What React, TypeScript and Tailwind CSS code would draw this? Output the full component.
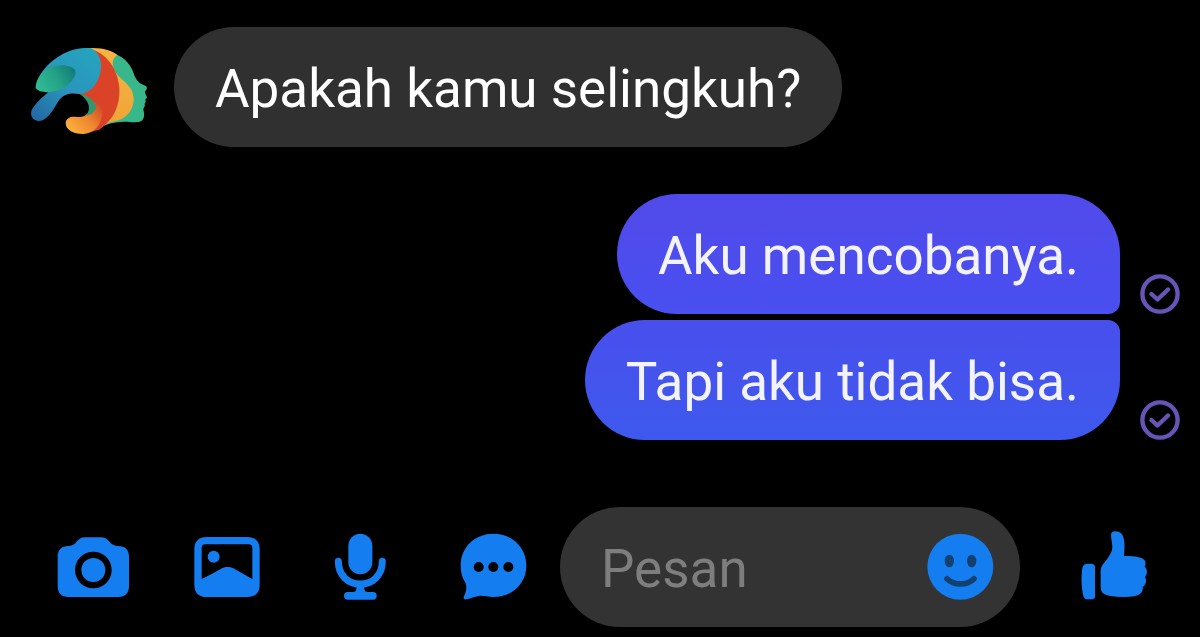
import type { ReactNode } from "react";

const outgoing = [
  {
    id: 1,
    text: "Aku mencobanya.",
    shape: "rounded-[60px] rounded-br-[12px] bg-linear-to-b from-[#514aea] to-[#494ff0]",
  },
  {
    id: 2,
    text: "Tapi aku tidak bisa.",
    shape: "rounded-[60px] rounded-tr-[12px] bg-linear-to-b from-[#484fec] to-[#3e59ee]",
  },
];

function Avatar() {
  return (
    <svg viewBox="30 -24 360 360" className="size-[120px] shrink-0" role="img" aria-label="Avatar">
      <defs>
        <linearGradient id="blue" x1="0.8" y1="0" x2="0.1" y2="1">
          <stop offset="0" stopColor="#25a3bd" />
          <stop offset="0.5" stopColor="#2b95bd" />
          <stop offset="1" stopColor="#2369a4" />
        </linearGradient>
        <linearGradient id="leaf" x1="0" y1="0.6" x2="1" y2="0.2">
          <stop offset="0" stopColor="#2fba92" />
          <stop offset="0.5" stopColor="#24a287" />
          <stop offset="1" stopColor="#127a78" />
        </linearGradient>
        <linearGradient id="hook" x1="0" y1="0.8" x2="1" y2="0">
          <stop offset="0" stopColor="#fbb23c" />
          <stop offset="0.5" stopColor="#ee8630" />
          <stop offset="1" stopColor="#cf3f22" />
        </linearGradient>
        <linearGradient id="yellow" x1="0" y1="0" x2="0" y2="1">
          <stop offset="0" stopColor="#f5b643" />
          <stop offset="1" stopColor="#f0a338" />
        </linearGradient>
      </defs>
      {/* face */}
      <path
        d="M262 50 C306 58 332 84 342 118 C348 136 358 147 378 153 C383 157 381 164 375 169 C374 176 381 183 381 188 C378 191 375 192 377 198 C378 202 373 205 374 209 C377 213 370 217 370 224 C374 238 374 250 363 259 C354 263 338 262 322 260 C296 260 270 262 246 275 Z"
        fill="#38b78b"
      />
      <path
        d="M206 39 C250 37 280 48 292 60 C272 72 276 96 290 116 C306 138 340 152 341 190 C342 222 322 252 284 259 C266 262 254 268 238 280 Z"
        fill="url(#yellow)"
      />
      <path
        d="M202 39 C262 52 294 104 298 160 C301 212 280 256 238 284 L214 290 L222 210 C214 196 200 184 178 176 L190 120 Z"
        fill="#db4329"
      />
      {/* curl under the head */}
      <path
        d="M222 200 C240 210 250 224 246 244 C240 274 218 298 188 297 C160 296 136 284 137 263 C139 247 155 243 172 246 C190 248 203 240 208 226 Z"
        fill="url(#hook)"
      />
      <path
        d="M178 176 C204 180 222 196 229 214 C226 228 218 238 206 240 C200 242 198 240 202 236 C212 220 208 196 178 176 Z"
        fill="#31976f"
      />
      <path
        d="M47 158 C48 132 68 104 90 84 C130 48 176 34 214 40 C240 54 248 84 240 116 C230 154 206 176 178 177 C150 172 128 178 114 200 C98 228 80 258 54 258 C34 256 28 236 38 220 C50 200 68 186 86 170 Z"
        fill="url(#blue)"
      />
      <path
        d="M47 160 C48 134 66 108 90 97 C114 86 154 90 165 104 C172 122 152 148 124 162 C98 174 60 176 47 160 Z"
        fill="url(#leaf)"
      />
    </svg>
  );
}

function SentMark() {
  return (
    <svg
      viewBox="0 0 40 40"
      className="size-10 shrink-0"
      fill="none"
      stroke="#6854b8"
      strokeWidth="4.4"
      strokeLinecap="round"
      strokeLinejoin="round"
      role="img"
      aria-label="Terkirim"
    >
      <circle cx="20" cy="20" r="17.6" />
      <path d="M11.5 20 L17.5 25.5 L28 15.5" />
    </svg>
  );
}

function IconButton({ label, viewBox, children }: { label: string; viewBox: string; children: ReactNode }) {
  return (
    <button type="button" aria-label={label} className="shrink-0 cursor-pointer">
      <svg viewBox={viewBox} className="size-[72px]" fill="#147df0">
        {children}
      </svg>
    </button>
  );
}

export default function App() {
  return (
    <div className="flex min-h-screen flex-col bg-black pt-[27px] pb-[10px] font-[Roboto,sans-serif] text-[53px] leading-[60px] text-white">
      <main className="flex flex-1 flex-col">
        <div className="flex items-center gap-6 pl-[30px]">
          <Avatar />
          <p className="rounded-[60px] bg-[#303030] px-[41px] pt-8 pb-7">Apakah kamu selingkuh?</p>
        </div>

        <div className="mt-[47px] flex flex-col gap-[6px] pr-5">
          {outgoing.map((message) => (
            <div key={message.id} className="flex items-end justify-end gap-5">
              <p className={`px-[41px] pt-8 pb-7 text-[#f3f3ff] ${message.shape}`}>{message.text}</p>
              <SentMark />
            </div>
          ))}
        </div>
      </main>

      <form className="flex items-center pr-[50px] pl-[57px]" onSubmit={(e) => e.preventDefault()}>
        <div className="flex gap-[61px]">
          <IconButton label="Kamera" viewBox="51 33 216 216">
            <path
              fillRule="evenodd"
              d="M86 78 C112 78 108 52 136 52 H182 C210 52 206 78 234 78 C256 78 267 90 267 110 V198 C267 220 256 231 234 231 H86 C64 231 53 220 53 198 V110 C53 90 64 78 86 78 Z M160 95 a55 55 0 1 0 0 110 a55 55 0 1 0 0 -110 Z"
            />
            <circle cx="160" cy="150" r="36" />
          </IconButton>
          <IconButton label="Galeri" viewBox="450 33 216 216">
            <path
              fillRule="evenodd"
              d="M500 51 H622 C646 51 659 64 659 88 V194 C659 218 646 231 622 231 H500 C476 231 463 218 463 194 V88 C463 64 476 51 500 51 Z M496 73 C489 73 485 77 485 84 V177 C508 165 526 156 542 147 C556 139 570 139 584 147 L637 177 V84 C637 77 633 73 626 73 Z"
            />
            <circle cx="521" cy="110" r="18" />
          </IconButton>
          <IconButton label="Rekam suara" viewBox="9 33 216 216">
            <rect x="85" y="41" width="72" height="122" rx="36" />
            <path
              d="M55 124 C55 166 84 192 121 192 C158 192 187 166 187 124"
              fill="none"
              stroke="#147df0"
              strokeWidth="21"
              strokeLinecap="round"
            />
            <path d="M109 190 H133 V206 C133 212 137 216 143 216 H159 a11 11 0 0 1 11 11 a12 12 0 0 1 -11 12 H83 a12 12 0 0 1 -11 -12 a11 11 0 0 1 11 -11 H99 C105 216 109 212 109 206 Z" />
          </IconButton>
          <IconButton label="Stiker" viewBox="408 33 216 216">
            <path
              fillRule="evenodd"
              d="M520 41 C576 41 619 82 619 137 C619 191 576 231 520 231 C502 231 490 226 476 228 C462 231 450 236 438 238 C432 239 429 235 432 229 C438 216 442 202 436 188 C426 172 422 156 422 137 C422 82 464 41 520 41 Z M476 126 a15 15 0 1 0 0 30 a15 15 0 1 0 0 -30 Z M520 126 a15 15 0 1 0 0 30 a15 15 0 1 0 0 -30 Z M565 126 a15 15 0 1 0 0 30 a15 15 0 1 0 0 -30 Z"
            />
          </IconButton>
        </div>

        <div className="mr-[58px] ml-[32px] flex min-w-0 flex-1 items-center rounded-full bg-[#333333] pr-[23px] pl-[41px]">
          <input
            type="text"
            aria-label="Pesan"
            placeholder="Pesan"
            className="min-w-0 flex-1 bg-transparent pt-8 pb-7 leading-[60px] outline-none placeholder:text-[#7e7e7e]"
          />
          <IconButton label="Emoji" viewBox="75 93 216 216">
            <circle cx="181" cy="200" r="99" />
            <ellipse cx="148" cy="183" rx="14" ry="19" fill="#12406f" />
            <ellipse cx="215" cy="183" rx="14" ry="19" fill="#12406f" />
            <path
              d="M141 236 C162 257 201 257 222 236"
              fill="none"
              stroke="#12406f"
              strokeWidth="17"
              strokeLinecap="round"
            />
          </IconButton>
        </div>

        <IconButton label="Suka" viewBox="534 93 216 216">
          <path d="M563 191 H574 C581 191 585 195 585 202 V289 C585 295 582 298 576 298 H562 C555 298 552 295 550 288 C544 264 543 230 547 204 C549 195 554 191 563 191 Z" />
          <path d="M634 99 C640 91 655 92 663 100 C674 112 675 130 672 168 C690 168 708 169 722 173 C736 177 740 189 734 200 C743 208 743 222 735 230 C741 242 738 254 728 261 C731 276 720 286 702 289 C678 292 652 291 628 287 C610 284 602 277 602 262 V216 C602 202 606 196 614 187 C626 172 636 158 637 142 C637 126 631 110 634 99 Z" />
        </IconButton>
      </form>
    </div>
  );
}
